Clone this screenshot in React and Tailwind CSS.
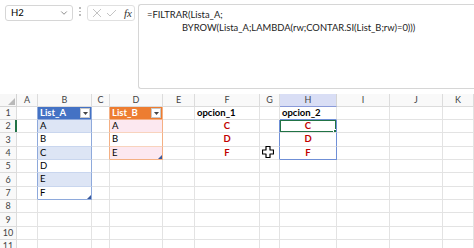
import { ChevronDown } from 'lucide-react'

const COLS = ['', 'A', 'B', 'C', 'D', 'E', 'F', 'G', 'H', 'I', 'J', 'K']
const ROWS = [1, 2, 3, 4, 5, 6, 7, 8, 9, 10, 11]

const VALUES = {
  B: ['List_A', 'A', 'B', 'C', 'D', 'E', 'F'],
  D: ['List_B', 'A', 'B', 'E'],
  F: ['opcion_1', 'C', 'D', 'F'],
  H: ['opcion_2', 'C', 'D', 'F'],
}

function DropButton() {
  return (
    <span className="ml-auto mr-[1px] flex h-[10px] w-[10px] items-center justify-center border border-[#c8c8c8] bg-white">
      <svg width="5" height="3" viewBox="0 0 5 3"><polygon points="0,0 5,0 2.5,3" fill="#444" /></svg>
    </span>
  )
}

function ResizeMark() {
  return (
    <svg className="absolute bottom-0 right-0" width="4" height="4" viewBox="0 0 4 4">
      <polygon points="4,0 4,4 0,4" fill="#3a5a9c" />
    </svg>
  )
}

function Cell({ c, r }) {
  const col = COLS[c]
  let right = 'border-r-[#e3e3e3]'
  let bottom = 'border-b-[#e3e3e3]'
  let bg = 'bg-white'
  let txt = 'text-black'
  let align = 'justify-start pl-[2px]'
  let extra = null

  if (col === 'A' && r <= 7) right = 'border-r-[#8ea9db]'
  if (col === 'B' && r <= 7) {
    right = 'border-r-[#8ea9db]'
    bottom = r === 1 || r === 7 ? 'border-b-[#8ea9db]' : 'border-b-[#c9d6ee]'
    bg = r === 1 ? 'bg-[#4472c4]' : r % 2 === 0 ? 'bg-[#dde5f5]' : 'bg-white'
    if (r === 1) txt = 'text-white font-bold'
    if (r === 7) extra = <ResizeMark />
  }
  if (col === 'C' && r <= 4) right = 'border-r-[#f4b084]'
  if (col === 'D' && r <= 4) {
    right = 'border-r-[#f4b084]'
    bottom = r === 1 || r === 4 ? 'border-b-[#f4b084]' : 'border-b-[#f8d3bd]'
    bg = r === 1 ? 'bg-[#ed7d31]' : r === 3 ? 'bg-white' : 'bg-[#fce8f0]'
    if (r === 1) txt = 'text-white font-bold'
    if (r === 4) extra = <ResizeMark />
  }
  if (col === 'F' || col === 'H') {
    if (r === 1) txt = 'text-black font-bold'
    else if (r <= 4) { txt = 'text-[#c00000] font-bold'; align = 'justify-center' }
  }
  if (col === 'G' && r >= 2 && r <= 4) right = 'border-r-[#6f8fd6]'
  if (col === 'H' && r >= 2 && r <= 4) {
    right = 'border-r-[#6f8fd6]'
    if (r === 4) bottom = 'border-b-[#6f8fd6]'
  }
  if (col === 'H' && r === 1) bottom = 'border-b-[#6f8fd6]'

  const value = VALUES[col]?.[r - 1]

  return (
    <div className={`relative flex items-center overflow-hidden whitespace-nowrap border-r border-b ${right} ${bottom} ${bg} ${txt} ${align}`}>
      {value}
      {r === 1 && (col === 'B' || col === 'D') && <DropButton />}
      {extra}
      {col === 'H' && r === 2 && (
        <>
          <span className="absolute -left-[1px] -top-[1px] -right-[1px] -bottom-[1px] z-10 border-2 border-[#217346]" />
          <span className="absolute -right-[2px] -bottom-[2px] z-20 h-[5px] w-[5px] border border-white bg-[#217346]" />
        </>
      )}
    </div>
  )
}

export default function App() {
  return (
    <div className="relative h-[248px] w-[474px] overflow-hidden bg-white font-['Lato','Liberation_Sans',sans-serif] text-[9.5px] text-black">
      {/* formula bar */}
      <div className="flex h-[94px] items-start">
        <div className="ml-[5px] mt-[5px] flex h-[16px] w-[68px] items-center rounded-[3px] border border-[#d6d6d6] pl-[5px] pr-[3px] text-[9.5px]">
          <span>H2</span>
          <ChevronDown size={10} strokeWidth={1.6} className="ml-auto text-[#555]" />
        </div>
        <div className="mt-[7px] flex w-[14px] flex-col items-center gap-[2px]">
          <span className="h-[1.5px] w-[1.5px] bg-[#bbb]" />
          <span className="h-[1.5px] w-[1.5px] bg-[#bbb]" />
          <span className="h-[1.5px] w-[1.5px] bg-[#bbb]" />
        </div>
        <div className="mt-[5px] flex h-[16px] w-[48px] items-center rounded-[3px] border border-[#e0e0e0] pl-[3px]">
          <svg width="10" height="10" viewBox="0 0 10 10" className="ml-[1px]"><path d="M1 1 L9 9 M9 1 L1 9" stroke="#c4c4c4" strokeWidth="1" /></svg>
          <svg width="11" height="10" viewBox="0 0 11 10" className="ml-[4px]"><path d="M1 5 L4 8 L10 2" stroke="#c4c4c4" strokeWidth="1" fill="none" /></svg>
          <span className="ml-[7px] font-['Liberation_Serif',serif] text-[11px] italic text-[#333]">fx</span>
        </div>
        <div className="ml-[3px] mt-[4px] h-[85px] flex-1 rounded-l-[3px] border border-r-0 border-[#d6d6d6] pl-[8px] pt-[3px] text-[9.4px] leading-[13px] text-[#222]">
          <div>=FILTRAR(Lista_A;</div>
          <div className="pl-[35px]">BYROW(Lista_A;LAMBDA(rw;CONTAR.SI(List_B;rw)=0)))</div>
        </div>
      </div>

      {/* sheet grid */}
      <div className="grid grid-cols-[17px_21px_54px_18px_53px_32px_65px_20px_57px_53px_53px_31px] grid-rows-[13px_13px_13px_14px_13px_13px_14px_13px_13px_14px_13px_13px]">
        {COLS.map((col, c) =>
          c === 0 ? (
            <div key="corner" className="relative border-r border-b border-[#d4d4d4] bg-[#f7f7f7]">
              <svg className="absolute bottom-[1px] right-[1px]" width="7" height="7" viewBox="0 0 7 7"><polygon points="7,0 7,7 0,7" fill="#b9b9b9" /></svg>
            </div>
          ) : col === 'H' ? (
            <div key={col} className="flex items-center justify-center border-r border-b border-r-[#d4d4d4] border-b-[#8a9ad8] bg-[#d9def5] text-[9px] text-[#444]">{col}</div>
          ) : (
            <div key={col} className="flex items-center justify-center border-r border-b border-[#dcdcdc] bg-[#f9f9f9] text-[9px] text-[#444]">{col}</div>
          )
        )}
        {ROWS.map(r => [
          <div key={`h${r}`} className="relative flex items-center justify-center border-b border-r border-[#dcdcdc] bg-[#f9f9f9] text-[9px] text-[#444]">
            {r}
            {r === 2 && <span className="absolute right-[-1px] top-0 bottom-0 w-[2px] bg-[#217346]" />}
          </div>,
          ...COLS.slice(1).map((col, i) => <Cell key={`${col}${r}`} c={i + 1} r={r} />),
        ])}
      </div>

      {/* mouse pointer */}
      <svg className="absolute left-[262px] top-[146px]" width="12" height="12" viewBox="0 0 12 12">
        <polygon points="4,0.5 8,0.5 8,4 11.5,4 11.5,8 8,8 8,11.5 4,11.5 4,8 0.5,8 0.5,4 4,4" fill="white" stroke="black" strokeWidth="1.2" strokeLinejoin="round" />
      </svg>
    </div>
  )
}
